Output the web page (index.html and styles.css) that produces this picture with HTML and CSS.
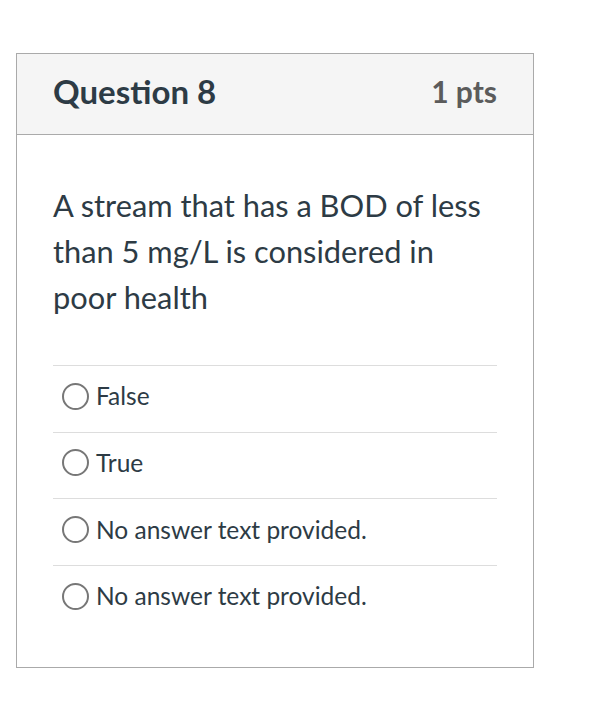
FILE: index.html
```html
<!DOCTYPE html>
<html>
<head>
<meta charset="utf-8">
<link rel="stylesheet" href="styles.css">
</head>
<body>
<div class="card">
  <div class="header">
    <span class="title">Question 8</span>
    <span class="points">1 pts</span>
  </div>
  <div class="body">
    <p class="question">A stream that has a BOD of less than 5 mg/L is considered in poor health</p>
    <div class="answers">
      <div class="answer"><span class="radio"></span><span class="label">False</span></div>
      <div class="answer"><span class="radio"></span><span class="label">True</span></div>
      <div class="answer"><span class="radio"></span><span class="label">No answer text provided.</span></div>
      <div class="answer"><span class="radio"></span><span class="label">No answer text provided.</span></div>
    </div>
  </div>
</div>
</body>
</html>
```

FILE: styles.css
```css
html, body {
  margin: 0;
  padding: 0;
  background: #fff;
}
body {
  font-family: Lato, "Open Sans", sans-serif;
  color: #2d3b45;
}
.card {
  margin: 53px 0 0 16px;
  width: 516px;
  border: 1px solid #aaa;
}
.header {
  height: 81px;
  box-sizing: border-box;
  background: #f5f5f5;
  border-bottom: 1px solid #aaa;
  display: flex;
  align-items: center;
  justify-content: space-between;
  padding: 0 36px 7px 36px;
}
.title {
  font-weight: 700;
  font-size: 33px;
  color: #2d3b45;
}
.points {
  font-weight: 700;
  font-size: 30px;
  color: #5b5b5b;
}
.body {
  padding: 48px 36px 35px 36px;
}
.question {
  margin: 0 0 44px 0;
  font-size: 30.8px;
  line-height: 46px;
}
.answer {
  height: 66.67px;
  box-sizing: border-box;
  border-top: 1px solid #ddd;
  display: flex;
  align-items: center;
  padding: 0 0 5px 9px;
}
.radio {
  width: 23px;
  height: 23px;
  border: 2px solid #777;
  border-radius: 50%;
  margin-right: 7px;
  flex: none;
}
.label {
  font-size: 24.5px;
  line-height: 30px;
}
```
